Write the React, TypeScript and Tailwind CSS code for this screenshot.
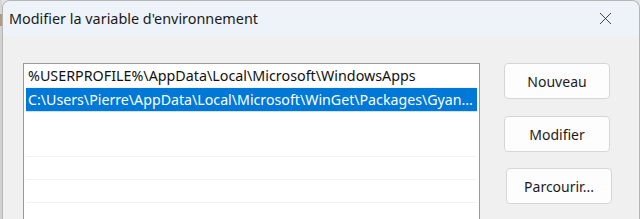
import { X } from "lucide-react";

const ROWS = [
  "%USERPROFILE%\\AppData\\Local\\Microsoft\\WindowsApps",
  "C:\\Users\\Pierre\\AppData\\Local\\Microsoft\\WinGet\\Packages\\Gyan...",
  "",
  "",
  "",
  "",
  "",
];

function Button({ label, className }: { label: string; className?: string }) {
  return (
    <button
      type="button"
      className={
        "flex h-[36px] w-[106px] items-center justify-center rounded-[4px] border border-[#d6d6d6] bg-[#fdfdfd] text-[14px] text-[#1b1b1b] " +
        (className ?? "")
      }
    >
      {label}
    </button>
  );
}

export default function App() {
  return (
    <div
      className="flex h-[219px] w-[640px] overflow-hidden bg-[#e4e6ea]"
      style={{ fontFamily: '"Noto Sans", "Open Sans", sans-serif' }}
    >
      {/* bout de bureau visible à gauche */}
      <div className="flex w-[2px] shrink-0 flex-col bg-[#c9c9c9]">
        <div className="h-[14px] bg-[#d6d6d6]" />
        <div className="h-[12px] bg-[#b09a80]" />
        <div className="flex-1 bg-[#d2d2d2]" />
      </div>

      <div className="flex flex-1 flex-col overflow-hidden rounded-t-[8px] border-x border-t border-[#b5b5b5]">
        {/* barre de titre */}
        <div className="flex h-[35px] shrink-0 items-center justify-between bg-[#eef3f9] pl-[6px] pr-[23px]">
          <span className="text-[14.4px] text-[#1a1a1a]">Modifier la variable d'environnement</span>
          <X className="size-[21px] text-[#2b2b2b]" strokeWidth={1} />
        </div>

        <div className="flex flex-1 bg-[#f0f0f0] pl-[20px] pt-[27px]">
          <div className="w-[457px] self-start border border-[#9a9a9a] bg-white px-[2px] pt-[1px]">
            {ROWS.map((row, i) => (
              <div
                key={i}
                className={
                  i === 1
                    ? "flex h-[23px] items-center overflow-hidden bg-[#0078d7] px-[2px] text-[14.2px] whitespace-nowrap text-white"
                    : i === 2
                      ? "flex h-[23px] items-center border-t border-[#cce4f7] px-[2px] text-[14.3px] whitespace-nowrap text-[#111]"
                      : "flex h-[23px] items-center border-b border-[#f2f2f2] px-[2px] text-[14.3px] whitespace-nowrap text-[#111]"
                }
              >
                {row}
              </div>
            ))}
          </div>

          <div className="ml-[24px] flex flex-col">
            <Button label="Nouveau" />
            <Button label="Modifier" className="mt-[17px]" />
            <Button label="Parcourir..." className="ml-[2px] mt-[16px]" />
          </div>
        </div>
      </div>
    </div>
  );
}
